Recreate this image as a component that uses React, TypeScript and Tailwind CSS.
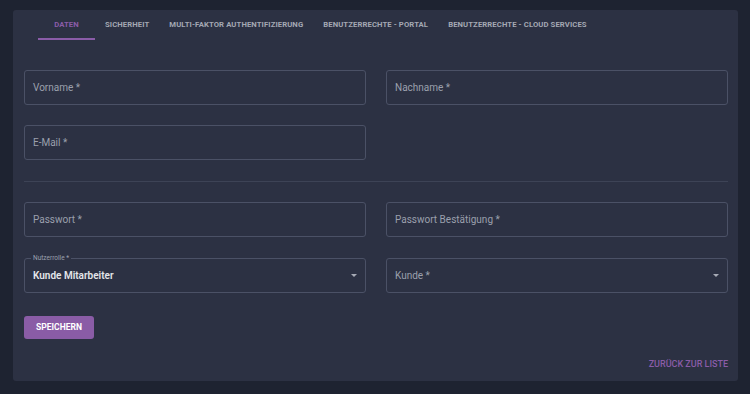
import React from 'react';

const tabs = [
  'Daten',
  'Sicherheit',
  'Multi-Faktor Authentifizierung',
  'Benutzerrechte - Portal',
  'Benutzerrechte - Cloud Services',
];

interface FieldProps {
  label: string;
}

function TextField({ label }: FieldProps) {
  return (
    <div className="h-[35px] rounded-[3px] border border-[#4b5166] flex items-center px-[8px]">
      <span className="text-[10px] text-[#9ba0ad]">{label}</span>
    </div>
  );
}

function Arrow() {
  return (
    <svg width="6" height="3" viewBox="0 0 6 3" className="shrink-0">
      <path d="M0 0h6L3 3z" fill="#a7abb6" />
    </svg>
  );
}

function SelectField({ label, value }: { label: string; value?: string }) {
  return (
    <div className="relative h-[35px] rounded-[3px] border border-[#4b5166] flex items-center justify-between pl-[8px] pr-[8px]">
      {value && (
        <span className="absolute -top-[5px] left-[6px] bg-[#2c3143] px-[2px] text-[6.5px] leading-[8px] text-[#9ba0ad]">
          {label}
        </span>
      )}
      {value ? (
        <span className="text-[10px] font-semibold text-[#e4e6ea]">{value}</span>
      ) : (
        <span className="text-[10px] text-[#9ba0ad]">{label}</span>
      )}
      <Arrow />
    </div>
  );
}

export default function App() {
  return (
    <div className="w-[750px] h-[394px] bg-[#1e2331] pt-[10px] pl-[13px]" style={{ fontFamily: 'Roboto, "Liberation Sans", sans-serif' }}>
      <div className="w-[725px] h-[371px] bg-[#2c3143] rounded-[3px] flex flex-col">
        {/* Tabs */}
        <div className="flex pl-[25px] h-[30px]">
          {tabs.map((t, i) => (
            <div
              key={t}
              className={`relative min-w-[57px] px-[10px] flex items-center justify-center text-[7.7px] font-bold uppercase tracking-[0.1px] ${
                i === 0 ? 'text-[#8a5ca8]' : 'text-[#a4a8b3]'
              }`}
            >
              {t}
              {i === 0 && <div className="absolute left-0 right-0 bottom-0 h-[2px] bg-[#8a5ca8]" />}
            </div>
          ))}
        </div>

        {/* Form */}
        <div className="flex-1 flex flex-col pl-[11px] pr-[10px] pt-[30px]">
          <div className="grid grid-cols-2 gap-x-[20px] gap-y-[20px]">
            <TextField label="Vorname *" />
            <TextField label="Nachname *" />
            <TextField label="E-Mail *" />
          </div>

          <div className="h-px bg-[#3d4356] mt-[21px] mb-[20px]" />

          <div className="grid grid-cols-2 gap-x-[20px] gap-y-[21px]">
            <TextField label="Passwort *" />
            <TextField label="Passwort Bestätigung *" />
            <SelectField label="Nutzerrolle *" value="Kunde Mitarbeiter" />
            <SelectField label="Kunde *" />
          </div>

          <div className="mt-[23px] flex">
            <button className="block h-[23px] w-[70px] rounded-[3px] bg-[#8a5ca6] text-white text-[8.5px] font-bold uppercase">
              Speichern
            </button>
          </div>

          <div className="flex-1 flex items-end justify-end pb-[10px]">
            <span className="text-[9px] font-medium uppercase text-[#8a5ca8]">Zurück zur Liste</span>
          </div>
        </div>
      </div>
    </div>
  );
}
